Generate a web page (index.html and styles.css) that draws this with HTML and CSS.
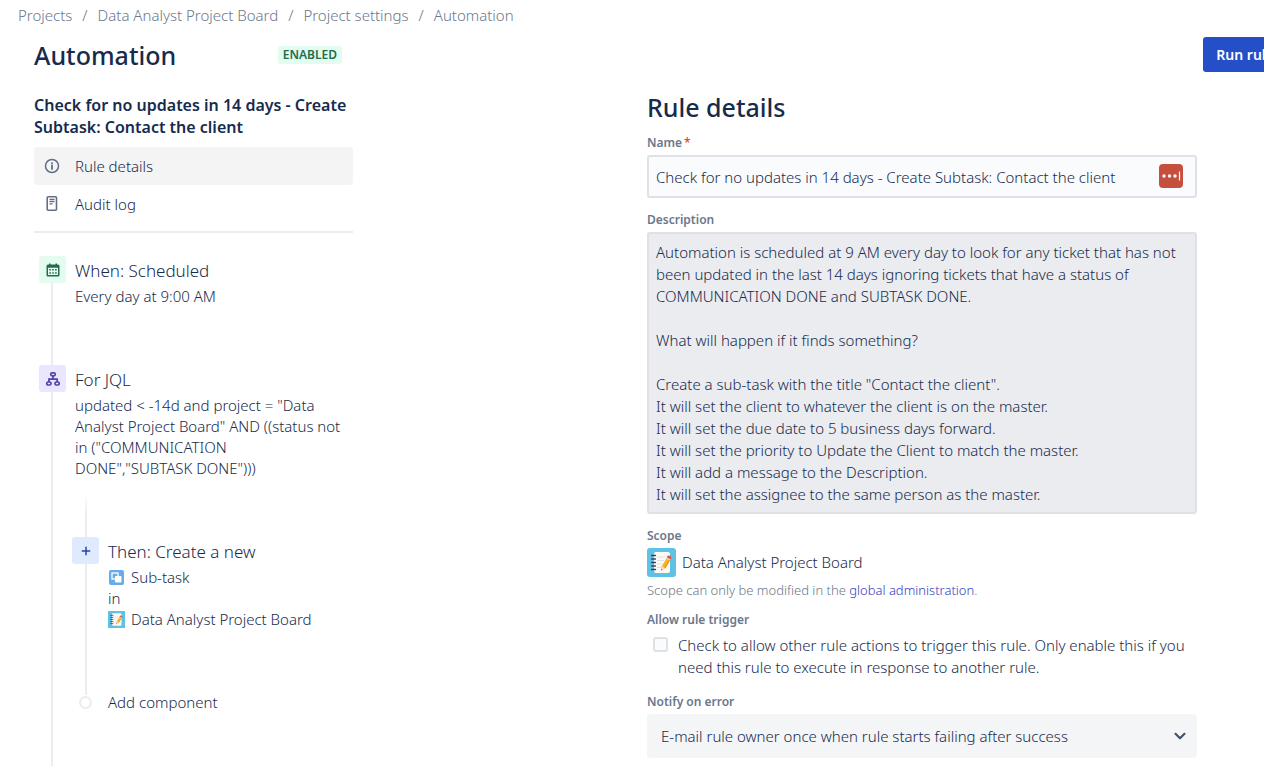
FILE: index.html
```html
<!DOCTYPE html>
<html lang="en">
<head>
  <meta charset="UTF-8">
  <meta name="viewport" content="width=device-width, initial-scale=1.0">
  <title>Automation - Data Analyst Project Board</title>
  <link rel="stylesheet" href="styles.css">
</head>
<body>
  <!-- shared project avatar -->
  <svg class="defs" aria-hidden="true">
    <symbol id="avatar" viewBox="0 0 29 29">
      <rect width="29" height="29" fill="#5fc1e3"/>
      <rect x="7" y="4" width="16" height="21" rx="2" fill="#fdfaf5"/>
      <path d="M10 9h8M10 12.500h7M10 16h5M10 19.500h4" stroke="#dcdfe5" stroke-width="1"/>
      <path d="M4.500 7.500h4M4.500 11h4M4.500 14.500h4M4.500 18h4M4.500 21.500h4" stroke="#344563" stroke-width="1.300" stroke-linecap="round"/>
      <path d="M14 22.500l.7-4.300 5-8.500 3.700 2-5 8.500z" fill="#fbb72c"/>
      <path d="M18.400 20.200l5-8.500-1.400-.8-5.300 8.700z" fill="#f19a1d"/>
      <path d="M14 22.500l.7-4.300 3.700 2z" fill="#f7dcb8"/>
      <path d="M14 22.500l.25-1.600 1.100.7z" fill="#344563"/>
      <path d="M19.100 10.600l1-1.700 3.700 2-1 1.700z" fill="#d5dbe3"/>
      <path d="M19.700 9.300c.8-1.700 2-2.100 3.400-1.400 1.400.8 1.600 2 .6 3.500z" fill="#e8503a"/>
    </symbol>
  </svg>

  <nav class="breadcrumbs">
    <a href="#">Projects</a><span>/</span>
    <a href="#">Data Analyst Project Board</a><span>/</span>
    <a href="#">Project settings</a><span>/</span>
    <a href="#">Automation</a>
  </nav>

  <header class="page-header">
    <div class="page-title">
      <h1>Automation</h1>
      <span class="lozenge">ENABLED</span>
    </div>
    <button type="button" class="run-button">Run rule</button>
  </header>

  <main class="content">
    <aside class="sidebar">
      <h3 class="rule-name">Check for no updates in 14 days - Create Subtask: Contact the client</h3>
      <nav class="rule-nav">
        <a href="#" class="nav-item active">
          <svg width="16" height="16" viewBox="0 0 16 16" fill="none" stroke="#626f86">
            <circle cx="8" cy="8" r="6.500" stroke-width="1.500"/>
            <circle cx="8" cy="5.200" r="1" fill="#626f86" stroke="none"/>
            <path d="M8 7.500v3.500" stroke-width="1.800" stroke-linecap="round"/>
          </svg>
          Rule details
        </a>
        <a href="#" class="nav-item">
          <svg width="16" height="16" viewBox="0 0 16 16" fill="none" stroke="#626f86">
            <rect x="3.200" y=".8" width="9.300" height="13.500" rx="1" stroke-width="1.600"/>
            <path d="M5.500 3.500h5M5.500 5.700h5M5.500 7.900h3" stroke-width="1.300"/>
          </svg>
          Audit log
        </a>
      </nav>

      <div class="chain">
        <div class="step first">
          <div class="rail">
            <span class="step-icon green">
              <svg width="16" height="16" viewBox="0 0 16 16">
                <path fill="#216e4e" d="M3 2.500h1V1.400h1.500v1.100h5V1.400H12v1.100h1a1.500 1.500 0 0 1 1.500 1.500v9a1.500 1.500 0 0 1-1.500 1.500H3A1.500 1.500 0 0 1 1.500 13V4A1.500 1.500 0 0 1 3 2.500z"/>
                <rect x="3" y="5.800" width="10" height="7.300" rx=".5" fill="#e3fcef"/>
                <path fill="#216e4e" d="M4.300 7h1.600v1.600H4.300zM7.200 7h1.600v1.600H7.200zM10.100 7h1.600v1.600h-1.600zM4.300 10.200h1.600v1.600H4.300zM7.200 10.200h1.600v1.600H7.200zM10.100 10.200h1.600v1.600h-1.600z"/>
              </svg>
            </span>
          </div>
          <div class="step-body">
            <h4>When: Scheduled</h4>
            <p>Every day at 9:00 AM</p>
          </div>
        </div>

        <div class="step last">
          <div class="rail">
            <span class="step-icon purple">
              <svg width="16" height="16" viewBox="0 0 16 16" fill="none" stroke="#5243aa" stroke-width="1.700">
                <rect x="5.800" y="1.800" width="4.400" height="3" rx="1.300"/>
                <rect x="1.800" y="11" width="4.200" height="3" rx="1.300"/>
                <rect x="10" y="11" width="4.200" height="3" rx="1.300"/>
                <path d="M8 5v3M3.900 11V8.200h8.200V11"/>
              </svg>
            </span>
          </div>
          <div class="step-body">
            <h4>For JQL</h4>
            <p>updated &lt; -14d and project = "Data Analyst Project Board" AND ((status not in ("COMMUNICATION DONE","SUBTASK DONE")))</p>

            <div class="branch">
              <div class="lead"></div>
              <div class="step action">
                <div class="rail">
                  <span class="step-icon blue">
                    <svg width="16" height="16" viewBox="0 0 16 16" stroke="#2347a8" stroke-width="1.500" stroke-linecap="round">
                      <path d="M8 4.300v7.400M4.300 8h7.400"/>
                    </svg>
                  </span>
                </div>
                <div class="step-body">
                  <h4>Then: Create a new</h4>
                  <p class="with-icon">
                    <svg width="17" height="17" viewBox="0 0 17 17">
                      <rect x="1" y="1" width="15" height="15" rx="2" fill="#67abe8"/>
                      <rect x="4" y="4" width="6" height="6" fill="none" stroke="#fff" stroke-width="1.300"/>
                      <rect x="7" y="7" width="6.500" height="6.500" rx=".8" fill="#fff"/>
                    </svg>
                    Sub-task
                  </p>
                  <p>in</p>
                  <p class="with-icon">
                    <svg width="17" height="17"><use href="#avatar"/></svg>
                    Data Analyst Project Board
                  </p>
                </div>
              </div>
              <div class="add-row">
                <span class="dot"></span>
                <button type="button" class="add-button">Add component</button>
              </div>
            </div>
          </div>
        </div>
      </div>
    </aside>

    <form class="details">
      <h2>Rule details</h2>

      <div class="field">
        <label for="name">Name<span class="required">*</span></label>
        <div class="input-wrap">
          <input type="text" id="name" value="Check for no updates in 14 days - Create Subtask: Contact the client">
          <svg class="pass-icon" width="24" height="24" viewBox="0 0 24 24">
            <rect width="24" height="24" rx="4" fill="#c64e3c"/>
            <circle cx="5" cy="12" r="1.700" fill="#fff"/>
            <circle cx="10.500" cy="12" r="1.700" fill="#fff"/>
            <circle cx="16" cy="12" r="1.700" fill="#fff"/>
            <path d="M20.500 7.500v9" stroke="#fff" stroke-width="1.200"/>
          </svg>
        </div>
      </div>

      <div class="field">
        <label for="description">Description</label>
        <textarea id="description" rows="12">Automation is scheduled at 9 AM every day to look for any ticket that has not been updated in the last 14 days ignoring tickets that have a status of COMMUNICATION DONE and SUBTASK DONE.

What will happen if it finds something?

Create a sub-task with the title "Contact the client".
It will set the client to whatever the client is on the master.
It will set the due date to 5 business days forward.
It will set the priority to Update the Client to match the master.
It will add a message to the Description.
It will set the assignee to the same person as the master.</textarea>
      </div>

      <div class="field">
        <div class="label">Scope</div>
        <div class="scope">
          <svg class="scope-icon" width="29" height="29"><use href="#avatar"/></svg>
          Data Analyst Project Board
        </div>
        <p class="hint">Scope can only be modified in the <a href="#">global administration</a>.</p>
      </div>

      <div class="field">
        <div class="label">Allow rule trigger</div>
        <div class="check-row">
          <input type="checkbox" id="allow">
          <label for="allow">Check to allow other rule actions to trigger this rule. Only enable this if you need this rule to execute in response to another rule.</label>
        </div>
      </div>

      <div class="field">
        <label for="notify">Notify on error</label>
        <div class="input-wrap">
          <select id="notify">
            <option>E-mail rule owner once when rule starts failing after success</option>
          </select>
          <svg class="chevron" width="14" height="14" viewBox="0 0 14 14" fill="none" stroke="#42526e" stroke-width="2.200" stroke-linecap="round" stroke-linejoin="round">
            <path d="M2.500 4.800L7 9.300l4.500-4.500"/>
          </svg>
        </div>
      </div>
    </form>
  </main>
</body>
</html>
```
FILE: styles.css
```css
* {
  box-sizing: border-box;
}
body {
  margin: 0;
  min-height: 100vh;
  display: flex;
  flex-direction: column;
  overflow-x: hidden;
  background-color: #fff;
  color: #172b4d;
  font-family: "Noto Sans", "Open Sans", sans-serif;
  font-size: 15px;
  font-weight: 350;
  line-height: 22px;
}
h1, h2, h3, h4, p {
  margin: 0;
}
a {
  color: inherit;
  text-decoration: none;
}
svg {
  display: block;
  flex-shrink: 0;
}
.defs {
  display: none;
}

/* top */
.breadcrumbs {
  display: flex;
  gap: 10px;
  padding: 4px 18px 0;
  color: #6b778c;
}
.page-header {
  display: flex;
  justify-content: space-between;
  padding: 11px 0 0 34px;
  height: 61px;
}
.page-title {
  display: flex;
  justify-content: space-between;
  align-items: flex-start;
  width: 308px;
}
h1, h2 {
  font-size: 25px;
  line-height: 36px;
  font-weight: 500;
}
.lozenge {
  margin-top: 9px;
  padding: 0 5px;
  border-radius: 3px;
  background-color: #e3fcef;
  color: #216e4e;
  font-size: 12px;
  line-height: 18px;
  font-weight: 600;
}
.run-button {
  flex-shrink: 0;
  height: 35px;
  margin-right: -23px;
  padding: 0 13px;
  border: none;
  border-radius: 3px;
  background-color: #254fc8;
  color: #fff;
  font: inherit;
  font-size: 14px;
  font-weight: 600;
  cursor: pointer;
}
.content {
  flex: 1;
  display: flex;
  justify-content: space-between;
  padding: 0 67px 0 34px;
}

/* left column */
.sidebar {
  flex: 0 0 319px;
  display: flex;
  flex-direction: column;
}
.rule-name {
  padding: 7px 0 9px;
  font-size: 16px;
  font-weight: 600;
}
.rule-nav {
  padding-bottom: 8px;
  border-bottom: 2px solid #ebecf0;
}
.nav-item {
  display: flex;
  align-items: center;
  gap: 15px;
  height: 38px;
  padding: 0 10px;
  border-radius: 4px;
}
.nav-item.active {
  background-color: #f4f4f4;
}
.chain {
  flex: 1;
  display: flex;
  flex-direction: column;
  padding: 23px 6px 0 5px;
}
.step {
  display: flex;
  gap: 6px;
}
.step.first {
  min-height: 109px;
}
.step.last {
  flex: 1;
}
.step.action {
  min-height: 158px;
}
.rail {
  display: flex;
  flex-direction: column;
  width: 27px;
  flex-shrink: 0;
}
.rail::after {
  content: "";
  flex: 1;
  width: 2px;
  margin-left: 12px;
  background-color: #ebecf0;
}
.branch .rail::after {
  margin-left: 13px;
}
.step-icon {
  display: flex;
  align-items: center;
  justify-content: center;
  width: 27px;
  height: 27px;
  border-radius: 3px;
}
.green {
  background-color: #e3fcef;
}
.purple {
  background-color: #eae6ff;
}
.blue {
  background-color: #e0eaff;
}
.step-body {
  flex: 1;
}
.step-body h4 {
  padding: 0 0 1px 3px;
  font-size: 17px;
  line-height: 29px;
  font-weight: 300;
}
.step-body p {
  padding-left: 3px;
  line-height: 21px;
}
.step-body .with-icon {
  display: flex;
  align-items: center;
  gap: 6px;
}
.branch {
  padding: 11px 0 40px;
}
.lead {
  width: 2px;
  height: 47px;
  margin-left: 13px;
  background: linear-gradient(#fff, #ebecf0 60%);
}
.add-row {
  display: flex;
  align-items: center;
  gap: 16px;
  height: 14px;
  padding-left: 7px;
}
.dot {
  width: 13px;
  height: 13px;
  border: 2px solid #ebecf0;
  border-radius: 50%;
}
.add-button {
  padding: 0;
  border: none;
  background: none;
  color: inherit;
  font: inherit;
  cursor: pointer;
}

/* right column */
.details {
  flex: 0 1 550px;
}
.details h2 {
  padding: 2px 0 9px;
}
.field {
  margin-bottom: 13px;
}
.field > label,
.label {
  display: block;
  margin-bottom: 4px;
  color: #6b778c;
  font-size: 12px;
  line-height: 17px;
  font-weight: 600;
}
.required {
  padding-left: 2px;
  color: #de350b;
  font-weight: 400;
}
.input-wrap {
  position: relative;
}
input[type="text"],
textarea,
select {
  display: block;
  width: 100%;
  border: 2px solid #dfe1e6;
  border-radius: 3px;
  color: inherit;
  font: inherit;
  outline: none;
}
input[type="text"] {
  height: 43px;
  padding: 0 50px 0 7px;
  background-color: #fafbfc;
}
.pass-icon {
  position: absolute;
  top: 9px;
  right: 14px;
}
textarea {
  padding: 7px 0 7px 7px;
  background-color: #ebecf0;
  resize: none;
  overflow: hidden;
}
.scope {
  display: flex;
  align-items: center;
  gap: 6px;
  height: 28px;
}
.scope-icon {
  border-radius: 3px;
}
.hint {
  margin-top: 6px;
  color: #6b778c;
  font-size: 13px;
  line-height: 16px;
}
.hint a {
  color: #3440c0;
}
.check-row {
  display: flex;
  align-items: flex-start;
  gap: 10px;
  padding: 2px 0 2px 6px;
}
.check-row input {
  appearance: none;
  flex-shrink: 0;
  width: 15px;
  height: 15px;
  margin: 3px 0 0;
  border: 2px solid #dfe1e6;
  border-radius: 3px;
  background-color: #fafbfc;
}
select {
  appearance: none;
  height: 44px;
  padding: 0 40px 0 12px;
  border-color: #f4f5f7;
  background-color: #f4f5f7;
}
.chevron {
  position: absolute;
  top: 15px;
  right: 10px;
  pointer-events: none;
}
.details .field:last-child {
  margin-bottom: 0;
}
```
